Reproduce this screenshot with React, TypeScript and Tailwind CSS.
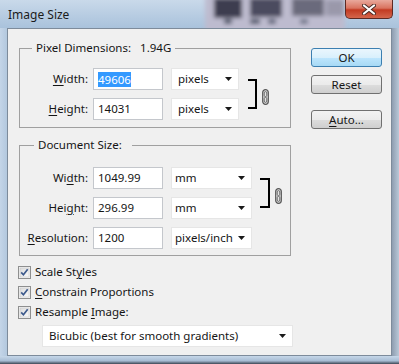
import type { ReactNode } from "react";

const ui = "[font-family:'Noto_Sans','Open_Sans',sans-serif]";

function U({ children }: { children: ReactNode }) {
  return <span className="underline underline-offset-[2px]">{children}</span>;
}

function Arrow() {
  return (
    <svg width="7" height="4" viewBox="0 0 7 4" className="shrink-0">
      <path d="M0 0h7L3.5 4z" fill="#1a1a1a" />
    </svg>
  );
}

function Field({ value, selected }: { value: string; selected?: boolean }) {
  return (
    <div className="ml-[5px] flex h-[22px] w-[70px] items-center border border-[#c4c7cc] bg-white pl-[4px]">
      {selected ? (
        <span className="bg-[#3399ff] leading-[15px] text-white">{value}</span>
      ) : (
        <span>{value}</span>
      )}
    </div>
  );
}

function Dropdown({ label, w, pl }: { label: string; w: string; pl: string }) {
  return (
    <div
      className={`ml-[8px] flex h-[22px] items-center justify-between border border-[#e6e6e6] bg-white pr-[6px] ${w} ${pl}`}
    >
      <span>{label}</span>
      <Arrow />
    </div>
  );
}

function Row({ label, value, unit, w, pl, selected }: {
  label: ReactNode;
  value: string;
  unit: string;
  w: string;
  pl: string;
  selected?: boolean;
}) {
  return (
    <div className="flex h-[22px] items-center">
      <span className="w-[68px] text-right">{label}</span>
      <Field value={value} selected={selected} />
      <Dropdown label={unit} w={w} pl={pl} />
    </div>
  );
}

// small chain link used by the constrain bracket
function Chain() {
  return (
    <svg width="7" height="16" viewBox="0 0 7 16" className="shrink-0">
      <rect x="0.7" y="0.7" width="5.6" height="14.6" rx="2.8" fill="#e4e4e4" stroke="#555" strokeWidth="1.2" />
      <rect x="2.2" y="2.6" width="2.6" height="5" rx="1.3" fill="none" stroke="#666" strokeWidth="1" />
      <rect x="2.2" y="8.4" width="2.6" height="5" rx="1.3" fill="none" stroke="#666" strokeWidth="1" />
    </svg>
  );
}

function Check() {
  return (
    <svg width="13" height="13" viewBox="0 0 13 13" className="shrink-0">
      <defs>
        <linearGradient id="cb" x1="0" y1="0" x2="1" y2="1">
          <stop offset="0" stopColor="#dcdcdc" />
          <stop offset="1" stopColor="#fbfbfb" />
        </linearGradient>
      </defs>
      <rect x="0.5" y="0.5" width="12" height="12" fill="#f4f4f4" stroke="#8e8f8f" />
      <rect x="2" y="2" width="9" height="9" fill="url(#cb)" stroke="#c8c8c8" strokeWidth="0.6" />
      <path d="M3.2 6.4l2.2 2.4 4.3-5.6" fill="none" stroke="#3d5a8c" strokeWidth="1.7" />
    </svg>
  );
}

function Btn({ children, primary }: { children: ReactNode; primary?: boolean }) {
  return (
    <div
      className={`flex h-[19px] w-[71px] items-center justify-center rounded-[3px] border ${
        primary
          ? "border-[#3c7fb1] bg-[linear-gradient(#eaf6fd_0%,#d9f0fc_50%,#bee6fd_51%,#a7d9f5_100%)]"
          : "border-[#707070] bg-[linear-gradient(#f2f2f2_0%,#ebebeb_50%,#dddddd_51%,#cfcfcf_100%)]"
      }`}
    >
      {children}
    </div>
  );
}

// blurred desktop seen through the glass title bar
function Backdrop() {
  return (
    <svg className="absolute inset-0" width="399" height="28" viewBox="0 0 399 28">
      <defs>
        <linearGradient id="tb" x1="0" y1="0" x2="0" y2="1">
          <stop offset="0" stopColor="#c9d9ea" />
          <stop offset="1" stopColor="#a9c2dc" />
        </linearGradient>
        <filter id="bl" x="-20%" y="-50%" width="140%" height="200%">
          <feGaussianBlur stdDeviation="2.2" />
        </filter>
      </defs>
      <rect width="399" height="28" fill="url(#tb)" />
      <g filter="url(#bl)">
        <rect x="205" y="-4" width="140" height="36" fill="#bdbbcf" />
        <rect x="214" y="-2" width="28" height="20" fill="#3e3e50" />
        <rect x="250" y="-2" width="32" height="19" fill="#4c4c5e" />
        <rect x="292" y="-2" width="32" height="18" fill="#6a6a7c" />
        <rect x="326" y="0" width="18" height="16" fill="#9a98aa" />
        <rect x="224" y="19" width="8" height="5" fill="#4e5468" />
        <rect x="250" y="19" width="10" height="5" fill="#4e5468" />
        <rect x="268" y="19" width="8" height="5" fill="#5e6478" />
        <rect x="300" y="19" width="8" height="5" fill="#6e7488" />
      </g>
    </svg>
  );
}

export default function App() {
  return (
    <div className={`flex h-[364px] w-[399px] flex-col overflow-hidden bg-[#b6cbe1] text-[11.5px] leading-[16px] text-[#151515] ${ui}`}>
      <div className="relative flex h-[28px] shrink-0 items-start">
        <Backdrop />
        <span className="relative ml-[8px] mt-[7px] text-[12px] text-[#1b1b1b]">Image Size</span>
        <div className="relative ml-auto mr-[6px] flex h-[19px] w-[48px] items-center justify-center rounded-b-[5px] border border-t-0 border-[#5d2a24] bg-[linear-gradient(#e9a99c_0%,#d9735f_45%,#c23a22_55%,#d4664c_100%)]">
          <svg width="14" height="11" viewBox="0 0 14 11">
            <path d="M2 1.5l10 8M12 1.5l-10 8" stroke="#4a2a24" strokeWidth="4" strokeLinecap="round" />
            <path d="M2 1.5l10 8M12 1.5l-10 8" stroke="#ffffff" strokeWidth="2.2" strokeLinecap="round" />
          </svg>
        </div>
      </div>

      <div className="flex">
        <div className="w-[7px] shrink-0 bg-[linear-gradient(90deg,#c4d5e8,#b3c8de)]" />
        <div className="flex h-[328px] w-[385px] shrink-0 border border-[#7d8b9b] bg-[#f0f0f0]">
          <div className="flex flex-col pl-[11px] pt-[11px]">
            <fieldset className="w-[272px] border border-[#a0a0a0] pb-[7px]">
              <legend className="ml-[12px] px-[4px]">
                Pixel Dimensions:<span className="ml-[9px]">1.94G</span>
              </legend>
              <div className="mt-[12px] flex">
                <div className="flex flex-col gap-[8px]">
                  <Row label={<><U>W</U>idth:</>} value="49606" unit="pixels" w="w-[68px]" pl="pl-[6px]" selected />
                  <Row label={<><U>H</U>eight:</>} value="14031" unit="pixels" w="w-[68px]" pl="pl-[6px]" />
                </div>
                <div className="my-[11px] ml-[9px] w-[9px] border-y-2 border-r-2 border-black" />
                <div className="ml-[5px] self-center pt-[6px]">
                  <Chain />
                </div>
              </div>
            </fieldset>

            <fieldset className="mt-[9px] w-[272px] border border-[#a0a0a0] pb-[6px]">
              <legend className="ml-[14px] pl-[4px] pr-[10px]">Document Size:</legend>
              <div className="mt-[14px] flex">
                <div className="flex flex-col gap-[8px]">
                  <Row label={<>Wi<U>d</U>th:</>} value="1049.99" unit="mm" w="w-[81px]" pl="pl-[3px]" />
                  <Row label={<>Hei<U>g</U>ht:</>} value="296.99" unit="mm" w="w-[81px]" pl="pl-[3px]" />
                </div>
                <div className="my-[11px] ml-[8px] w-[10px] border-y-2 border-r-2 border-black" />
                <div className="ml-[5px] self-center pt-[6px]">
                  <Chain />
                </div>
              </div>
              <div className="mt-[8px]">
                <Row label={<><U>R</U>esolution:</>} value="1200" unit="pixels/inch" w="w-[81px]" pl="pl-[3px]" />
              </div>
            </fieldset>

            <div className="mt-[6px] flex flex-col">
              <div className="flex h-[20px] items-center gap-[4px] -ml-[1px]">
                <Check />
                <span>Scale St<U>y</U>les</span>
              </div>
              <div className="flex h-[20px] items-center gap-[4px] -ml-[1px]">
                <Check />
                <span><U>C</U>onstrain Proportions</span>
              </div>
              <div className="flex h-[20px] items-center gap-[4px] -ml-[1px]">
                <Check />
                <span>Resample <U>I</U>mage:</span>
              </div>
              <div className="ml-[23px] mt-[3px] flex h-[22px] w-[251px] items-center justify-between border border-[#e6e6e6] bg-white pl-[6px] pr-[6px]">
                <span>Bicubic (best for smooth gradients)</span>
                <Arrow />
              </div>
            </div>
          </div>

          <div className="ml-[18px] flex flex-col pt-[19px]">
            <Btn primary>OK</Btn>
            <div className="mt-[8px]">
              <Btn>Reset</Btn>
            </div>
            <div className="mt-[16px]">
              <Btn><span><U>A</U>uto...</span></Btn>
            </div>
          </div>
        </div>
        <div className="w-[7px] shrink-0 bg-[linear-gradient(90deg,#8e9db0,#b9c8d8)]" />
      </div>
      <div className="h-[8px] shrink-0 bg-[linear-gradient(#c6d7e9,#a8bdd4_60%,#3c4654)]" />
    </div>
  );
}
